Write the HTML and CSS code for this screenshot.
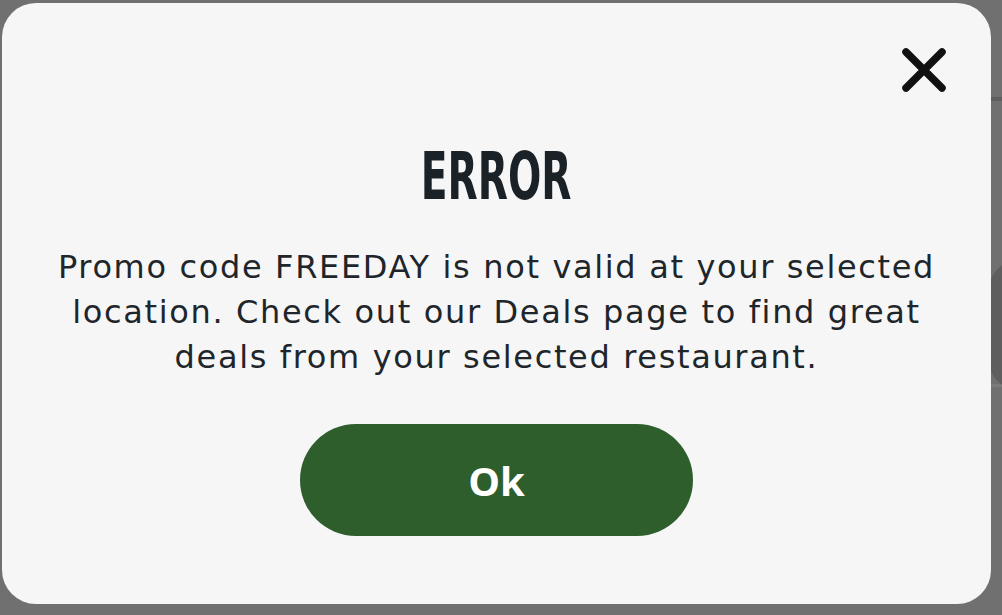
FILE: index.html
```html
<!DOCTYPE html>
<html lang="en">
<head>
    <meta charset="UTF-8">
    <meta name="viewport" content="width=device-width, initial-scale=1.0">
    <title>Error</title>
    <link rel="stylesheet" href="styles.css">
</head>
<body>
    <div class="backdrop">
        <!-- Hata penceresi -->
        <div class="modal" role="dialog" aria-labelledby="modal-title">
            <button class="close-btn" aria-label="Close">
                <svg width="44" height="44" viewBox="0 0 44 44">
                    <path d="M4 4 L40 40 M40 4 L4 40" stroke="#111111" stroke-width="7.5" stroke-linecap="round" fill="none"/>
                </svg>
            </button>
            <h1 id="modal-title"><span>ERROR</span></h1>
            <p class="message">Promo code FREEDAY is not valid at your selected location. Check out our Deals page to find great deals from your selected restaurant.</p>
            <button class="ok-btn">Ok</button>
        </div>
    </div>
</body>
</html>
```

FILE: styles.css
```css
html, body {
    margin: 0;
    padding: 0;
}

body {
    background:
        linear-gradient(#5f5f5f, #5f5f5f) right 0 top 97px / 12px 4px no-repeat,
        linear-gradient(#7a7a7a, #7a7a7a) right 0 top 384px / 12px 3px no-repeat,
        #707070;
    font-family: "DejaVu Sans", "Open Sans", sans-serif;
    height: 615px;
    overflow: hidden;
    position: relative;
}

/* sayfanın arkasında kalan koyu yarım daire */
body::before {
    content: "";
    position: absolute;
    right: -50px;
    top: 260px;
    width: 64px;
    height: 130px;
    border-radius: 40px;
    background: #5e5e5e;
}

.backdrop {
    position: relative;
    padding: 3px 11px 11px 2px;
}

.modal {
    position: relative;
    background: #f6f6f6;
    border-radius: 34px;
    height: 601px;
    box-sizing: border-box;
    display: flex;
    flex-direction: column;
    align-items: center;
    padding: 134px 40px 0;
    text-align: center;
}

.close-btn {
    position: absolute;
    top: 45px;
    right: 45px;
    width: 44px;
    height: 44px;
    padding: 0;
    background: none;
    border: none;
    cursor: pointer;
}

.close-btn svg {
    display: block;
}

h1 {
    margin: 0;
    font-family: "DejaVu Sans Condensed", "DejaVu Sans", sans-serif;
    font-weight: bold;
    font-size: 66px;
    line-height: 80px;
    color: #1b2227;
}

h1 span {
    display: inline-block;
    transform: scaleX(0.66);
}

.message {
    margin: 28px 0 0;
    font-size: 32px;
    line-height: 45px;
    letter-spacing: 1.65px;
    color: #1e262b;
}

.ok-btn {
    margin-top: 44px;
    width: 393px;
    height: 112px;
    border: none;
    border-radius: 56px;
    background: #2d5e2c;
    color: #ffffff;
    font-family: "Open Sans", sans-serif;
    font-weight: bold;
    font-size: 40px;
    cursor: pointer;
}
```
